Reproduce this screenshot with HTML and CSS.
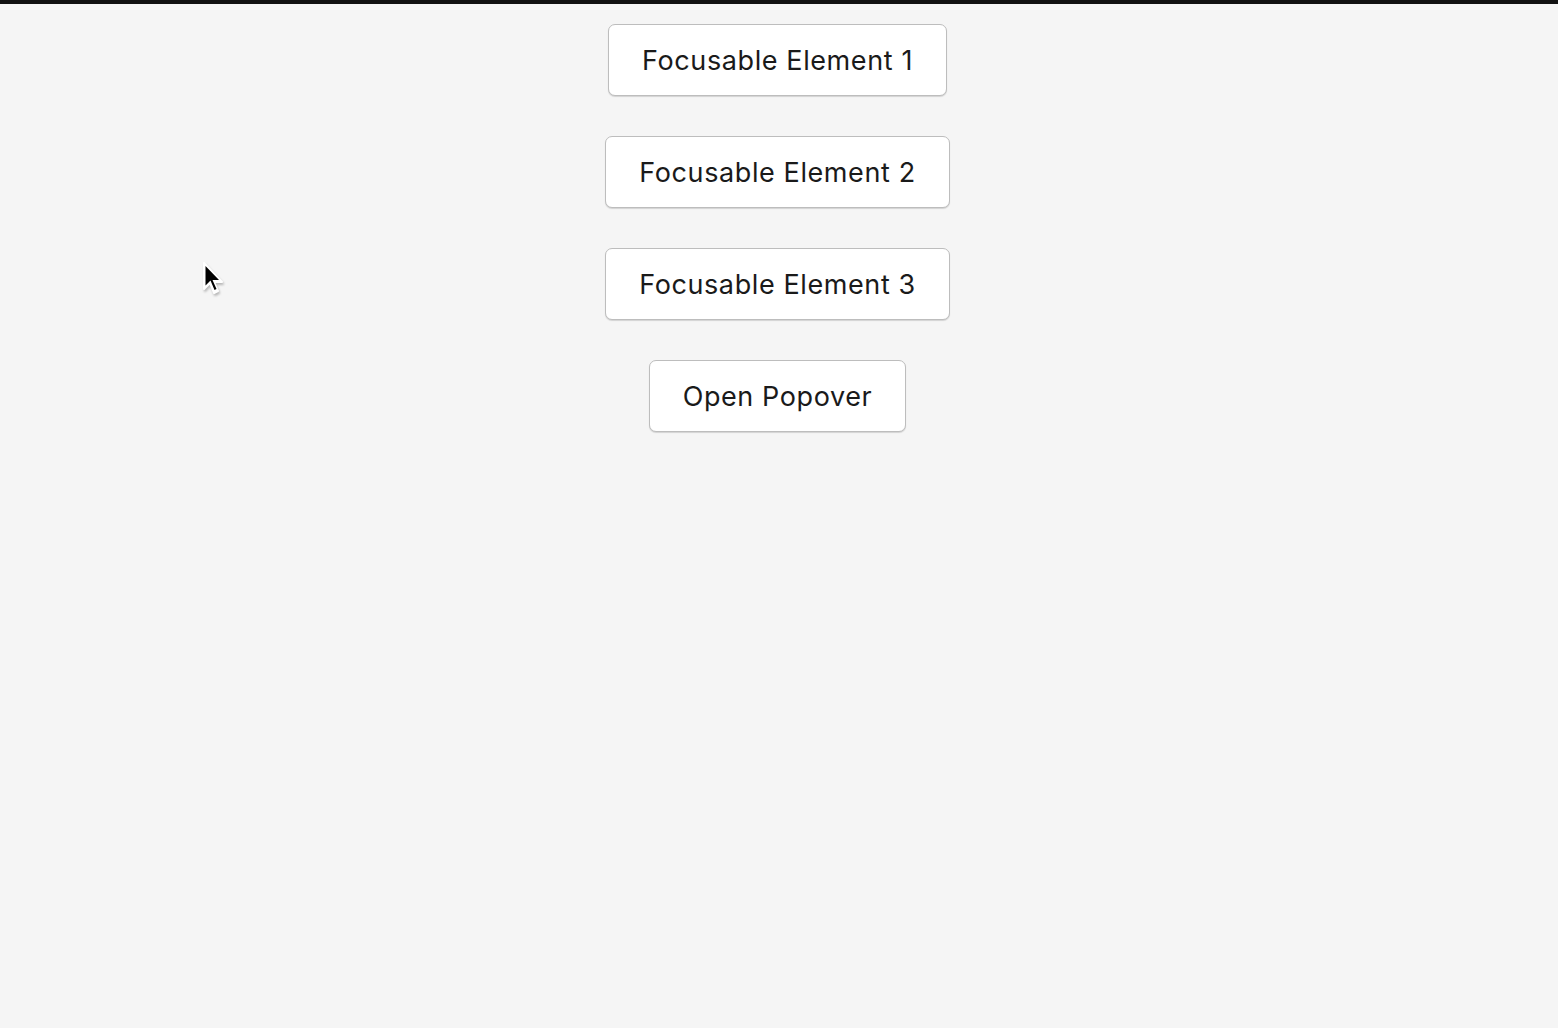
FILE: index.html
```html
<!DOCTYPE html>
<html lang="en">
<head>
    <meta charset="UTF-8">
    <meta name="viewport" content="width=device-width, initial-scale=1.0">
    <title>Popover focus demo</title>
    <link rel="stylesheet" href="styles.css">
</head>
<body>
    <div class="top-bar"></div>

    <main class="stack">
        <button class="btn" type="button">Focusable Element 1</button>
        <button class="btn" type="button">Focusable Element 2</button>
        <button class="btn" type="button">Focusable Element 3</button>
        <button class="btn" type="button">Open Popover</button>
    </main>

    <!-- mouse pointer -->
    <svg class="pointer" width="24" height="36" viewBox="0 0 24 36">
        <path d="M2 1 L2 27 L8 21 L12 31 L16 29 L12 20 L20 20 Z" fill="#fff" stroke="#fff" stroke-width="2" stroke-linejoin="round"/>
        <path d="M3.5 4 L3.5 23.5 L8.5 18.5 L12.5 28 L14.5 27 L10.5 18 L17 18 Z" fill="#000"/>
    </svg>
</body>
</html>
```

FILE: styles.css
```css
body {
    margin: 0;
    padding: 0;
    background-color: #f5f5f5;
    font-family: 'Inter', 'Noto Sans', sans-serif;
    min-height: 100vh;
}

.top-bar {
    height: 4px;
    background-color: #111;
}

.stack {
    display: flex;
    flex-direction: column;
    align-items: center;
    gap: 40px;
    padding-top: 20px;
    padding-right: 3px;
}

.btn {
    height: 72px;
    padding: 0 33px;
    background-color: #fff;
    color: #1a1a1a;
    border: 1px solid #bdbdbd;
    border-radius: 7px;
    box-shadow: 0 1px 1px rgba(0, 0, 0, 0.14);
    font-family: inherit;
    font-size: 27px;
    letter-spacing: 0.6px;
    cursor: pointer;
}

.pointer {
    position: absolute;
    left: 202px;
    top: 262px;
    filter: drop-shadow(1px 2px 1px rgba(0, 0, 0, 0.25));
}
```
